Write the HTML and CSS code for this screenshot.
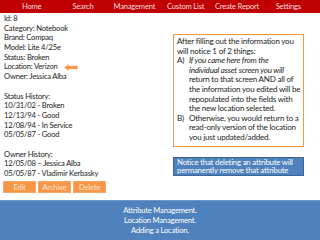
FILE: index.html
```html
<!DOCTYPE html>
<html>
<head>
<meta charset="utf-8">
<link rel="stylesheet" href="styles.css">
</head>
<body>
<nav class="nav">
  <span>Home</span><span>Search</span><span>Management</span><span>Custom List</span><span>Create Report</span><span>Settings</span>
</nav>
<main class="main">
  <section class="left">
    <div class="line">Id: 8</div>
    <div class="line">Category: Notebook</div>
    <div class="line">Brand: Compaq</div>
    <div class="line">Model: Lite 4/25e</div>
    <div class="line">Status: Broken</div>
    <div class="line loc">Location: Verizon
      <svg class="arrow" width="14" height="7" viewBox="0 0 14 7"><path d="M0.5 3.5 L4.5 0.5 L4.5 2 L13.5 2 L13.5 5 L4.5 5 L4.5 6.5 Z" fill="#f79646" stroke="#f5b27a" stroke-width="0.6"/></svg>
    </div>
    <div class="line">Owner: Jessica Alba</div>
    <div class="line blank"></div>
    <div class="line">Status History:</div>
    <div class="line">10/31/02 - Broken</div>
    <div class="line">12/13/94 - Good</div>
    <div class="line">12/08/94 - In Service</div>
    <div class="line">05/05/87 - Good</div>
    <div class="line blank"></div>
    <div class="line">Owner History:</div>
    <div class="line">12/05/08 – Jessica Alba</div>
    <div class="line">05/05/87 - Vladimir Kerbasky</div>
    <div class="buttons">
      <span class="btn">Edit</span><span class="btn">Archive</span><span class="btn">Delete</span>
    </div>
  </section>
  <section class="right">
    <div class="info">
      <p>After filling out the information you<br>will notice 1 of 2 things:</p>
      <div class="item"><span class="mark">A)</span><span class="txt"><em>If you came here from the<br>individual asset screen you will</em><br>return to that screen AND all of<br>the information you edited will be<br>repopulated into the fields with<br>the new location selected.</span></div>
      <div class="item"><span class="mark">B)</span><span class="txt">Otherwise, you would return to a<br>read-only version of the location<br>you just updated/added.</span></div>
    </div>
    <div class="notice">Notice that deleting an attribute will<br>permanently remove that attribute</div>
  </section>
</main>
<footer class="panel">
  <div>Attribute Management.</div>
  <div>Location Management.</div>
  <div>Adding a Location.</div>
</footer>
</body>
</html>
```
FILE: styles.css
```css
html, body {
  margin: 0;
  padding: 0;
  background: #ffffff;
}
body {
  width: 320px;
  height: 240px;
  overflow: hidden;
  font-family: Lato, "Open Sans", sans-serif;
  font-size: 7.6px;
  letter-spacing: -0.2px;
  color: #1c1c1c;
}
.nav {
  height: 13px;
  background: #c00000;
  display: grid;
  grid-template-columns: repeat(6, 1fr);
  padding: 0 6px;
  color: #f4dcdc;
  line-height: 13px;
  text-align: center;
}
.main {
  display: grid;
  grid-template-columns: 173px 131px;
  height: 187px;
}
.left {
  padding: 1px 0 0 4px;
}
.line {
  height: 9.7px;
  line-height: 9.7px;
  white-space: nowrap;
}
.loc {
  display: flex;
  align-items: center;
  gap: 6px;
}
.arrow {
  display: block;
}
.buttons {
  display: flex;
  gap: 2px;
  margin: 2px 0 0 -1px;
}
.btn {
  width: 31px;
  height: 10px;
  line-height: 10px;
  background: #f79646;
  border: 1px solid #f9a868;
  color: #fde6d2;
  text-align: center;
}
.right {
  padding-top: 21px;
}
.info {
  border: 1px solid #f79646;
  padding: 2px 3px 3px 3px;
  line-height: 9.6px;
  font-size: 8px;
  white-space: nowrap;
}
.info p {
  margin: 0;
}
.item {
  display: flex;
}
.mark {
  width: 12px;
  flex: none;
}
.txt {
  flex: 1;
}
.notice {
  margin-top: 10px;
  background: #4f81bd;
  border: 1px solid #3a6597;
  color: #ffffff;
  padding: 0 3px;
  line-height: 8.5px;
  font-size: 7.8px;
  white-space: nowrap;
}
.panel {
  height: 37px;
  background: #4f81bd;
  border-top: 1px solid #6e97c9;
  border-bottom: 1px solid #3f6ea6;
  color: #ffffff;
  text-align: center;
  line-height: 10px;
  padding-top: 4px;
}
```
